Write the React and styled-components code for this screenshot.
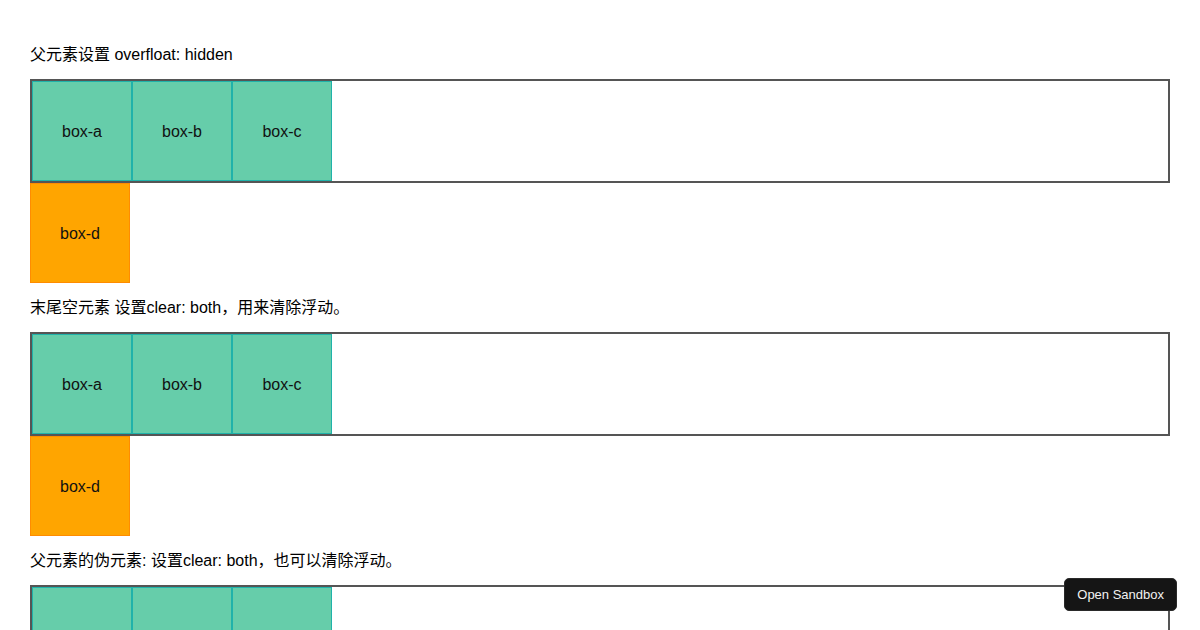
import React from 'react';
import styled, { createGlobalStyle } from 'styled-components';

const GlobalStyle = createGlobalStyle`
  html, body {
    margin: 0;
    padding: 0;
    background: #fff;
  }
  body {
    font-family: "Liberation Sans", Arial, "Noto Sans CJK SC", sans-serif;
    font-size: 16px;
    color: #000;
  }
`;

const Page = styled.div`
  padding: 30px 30px 0;
`;

const Title = styled.p`
  margin: 16px 0;
  line-height: 17px;
  font-size: 16px;
`;

const Wrapper = styled.div`
  border: 2px solid #555;
  overflow: hidden;
`;

const Box = styled.div`
  box-sizing: border-box;
  width: 100px;
  height: 100px;
  padding-top: 2px;
  float: ${p => (p.$float ? 'left' : 'none')};
  display: flex;
  align-items: center;
  justify-content: center;
  background: ${p => (p.$orange ? '#ffa500' : '#66cdaa')};
  border: 1px solid ${p => (p.$orange ? '#ff8c00' : '#20b2aa')};
  font-size: 16px;
  color: #111;
`;

const SandboxButton = styled.button`
  position: fixed;
  right: 23px;
  bottom: 19px;
  height: 33px;
  padding: 0 12px;
  border: 1px solid #2a2a2a;
  border-radius: 5px;
  background: #151515;
  color: #f2f2f2;
  font-family: "Liberation Sans", Arial, sans-serif;
  font-size: 13px;
  cursor: pointer;
`;

const sections = [
  '父元素设置 overfloat: hidden',
  '末尾空元素 设置clear: both，用来清除浮动。',
  '父元素的伪元素: 设置clear: both，也可以清除浮动。'
];

export default function App() {
  return (
    <Page>
      <GlobalStyle />
      {sections.map(title => (
        <section key={title}>
          <Title>{title}</Title>
          <Wrapper>
            <Box $float>box-a</Box>
            <Box $float>box-b</Box>
            <Box $float>box-c</Box>
          </Wrapper>
          <Box $orange>box-d</Box>
        </section>
      ))}
      <SandboxButton>Open Sandbox</SandboxButton>
    </Page>
  );
}
